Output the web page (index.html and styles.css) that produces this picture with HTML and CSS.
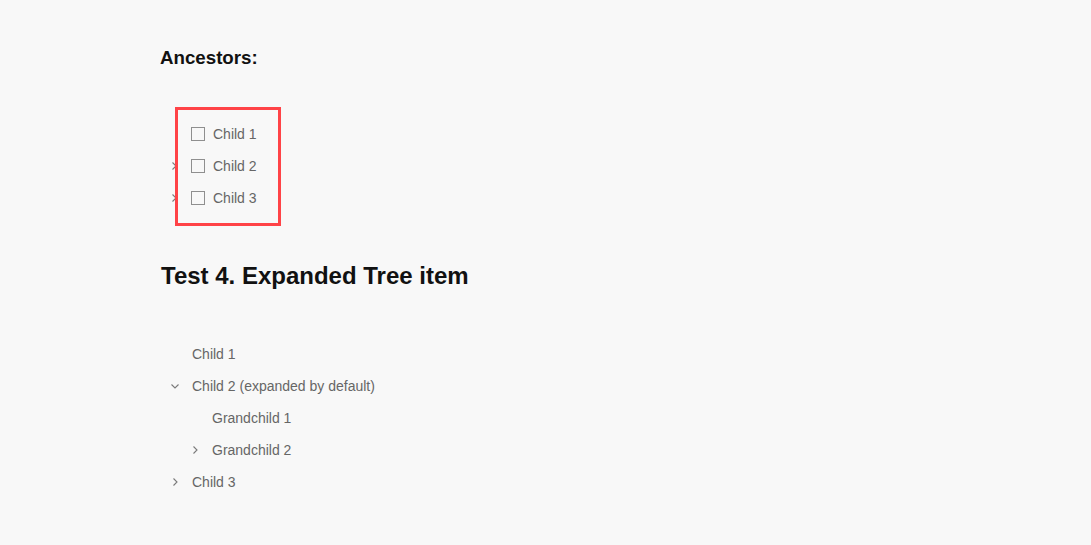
FILE: index.html
```html
<!DOCTYPE html>
<html lang="en">
<head>
<meta charset="utf-8">
<title>Tree tests</title>
<link rel="stylesheet" href="styles.css">
</head>
<body>
<main class="page">
  <h3 class="title-small">Ancestors:</h3>
  <div class="tree tree-check">
    <div class="row">
      <span class="toggle"></span>
      <span class="checkbox"></span>
      <span class="label">Child 1</span>
    </div>
    <div class="row">
      <span class="toggle"><svg width="5" height="8" viewBox="0 0 5 8"><path d="M0.5 0.5 L4 4 L0.5 7.5" fill="none" stroke="#7a7a7a" stroke-width="1.1"/></svg></span>
      <span class="checkbox"></span>
      <span class="label">Child 2</span>
    </div>
    <div class="row">
      <span class="toggle"><svg width="5" height="8" viewBox="0 0 5 8"><path d="M0.5 0.5 L4 4 L0.5 7.5" fill="none" stroke="#7a7a7a" stroke-width="1.1"/></svg></span>
      <span class="checkbox"></span>
      <span class="label">Child 3</span>
    </div>
    <div class="highlight"></div>
  </div>

  <h2 class="title-large">Test 4. Expanded Tree item</h2>
  <div class="tree tree-plain">
    <div class="row">
      <span class="toggle"></span>
      <span class="label">Child 1</span>
    </div>
    <div class="row">
      <span class="toggle"><svg width="8" height="5" viewBox="0 0 8 5"><path d="M0.5 0.5 L4 4 L7.5 0.5" fill="none" stroke="#7a7a7a" stroke-width="1.1"/></svg></span>
      <span class="label">Child 2 (expanded by default)</span>
    </div>
    <div class="row level-2">
      <span class="toggle"></span>
      <span class="label">Grandchild 1</span>
    </div>
    <div class="row level-2">
      <span class="toggle"><svg width="5" height="8" viewBox="0 0 5 8"><path d="M0.5 0.5 L4 4 L0.5 7.5" fill="none" stroke="#7a7a7a" stroke-width="1.1"/></svg></span>
      <span class="label">Grandchild 2</span>
    </div>
    <div class="row">
      <span class="toggle"><svg width="5" height="8" viewBox="0 0 5 8"><path d="M0.5 0.5 L4 4 L0.5 7.5" fill="none" stroke="#7a7a7a" stroke-width="1.1"/></svg></span>
      <span class="label">Child 3</span>
    </div>
  </div>
</main>
</body>
</html>
```

FILE: styles.css
```css
html, body {
  margin: 0;
  padding: 0;
  background: #f8f8f8;
  font-family: "Liberation Sans", Arial, sans-serif;
}

.page {
  padding: 47px 0 0 160px;
}

.title-small {
  margin: 0;
  font-size: 18.72px;
  line-height: 22px;
  font-weight: bold;
  color: #111;
}

.title-large {
  margin: 48px 0 0 1px;
  font-size: 24px;
  line-height: 28px;
  font-weight: bold;
  color: #111;
}

.tree {
  position: relative;
  margin-top: 49px;
  margin-left: 7px;
  width: max-content;
}

.tree-check {
  margin-left: 6px;
}

.tree-plain {
  margin-top: 48px;
}

.row {
  display: flex;
  align-items: center;
  height: 32px;
  font-size: 14px;
  color: #666;
}

.level-2 {
  padding-left: 20px;
}

.toggle {
  width: 16px;
  height: 16px;
  display: flex;
  align-items: center;
  justify-content: center;
  flex: none;
}

.toggle svg {
  display: block;
}

.label {
  margin-left: 9px;
  white-space: nowrap;
}

.checkbox {
  margin-left: 9px;
  width: 12px;
  height: 12px;
  border: 1px solid #8f8f8f;
  flex: none;
}

.checkbox + .label {
  margin-left: 8px;
}

.highlight {
  position: absolute;
  left: 9px;
  top: -11px;
  width: 100px;
  height: 113px;
  border: 3px solid #ff4347;
  pointer-events: none;
}
```
